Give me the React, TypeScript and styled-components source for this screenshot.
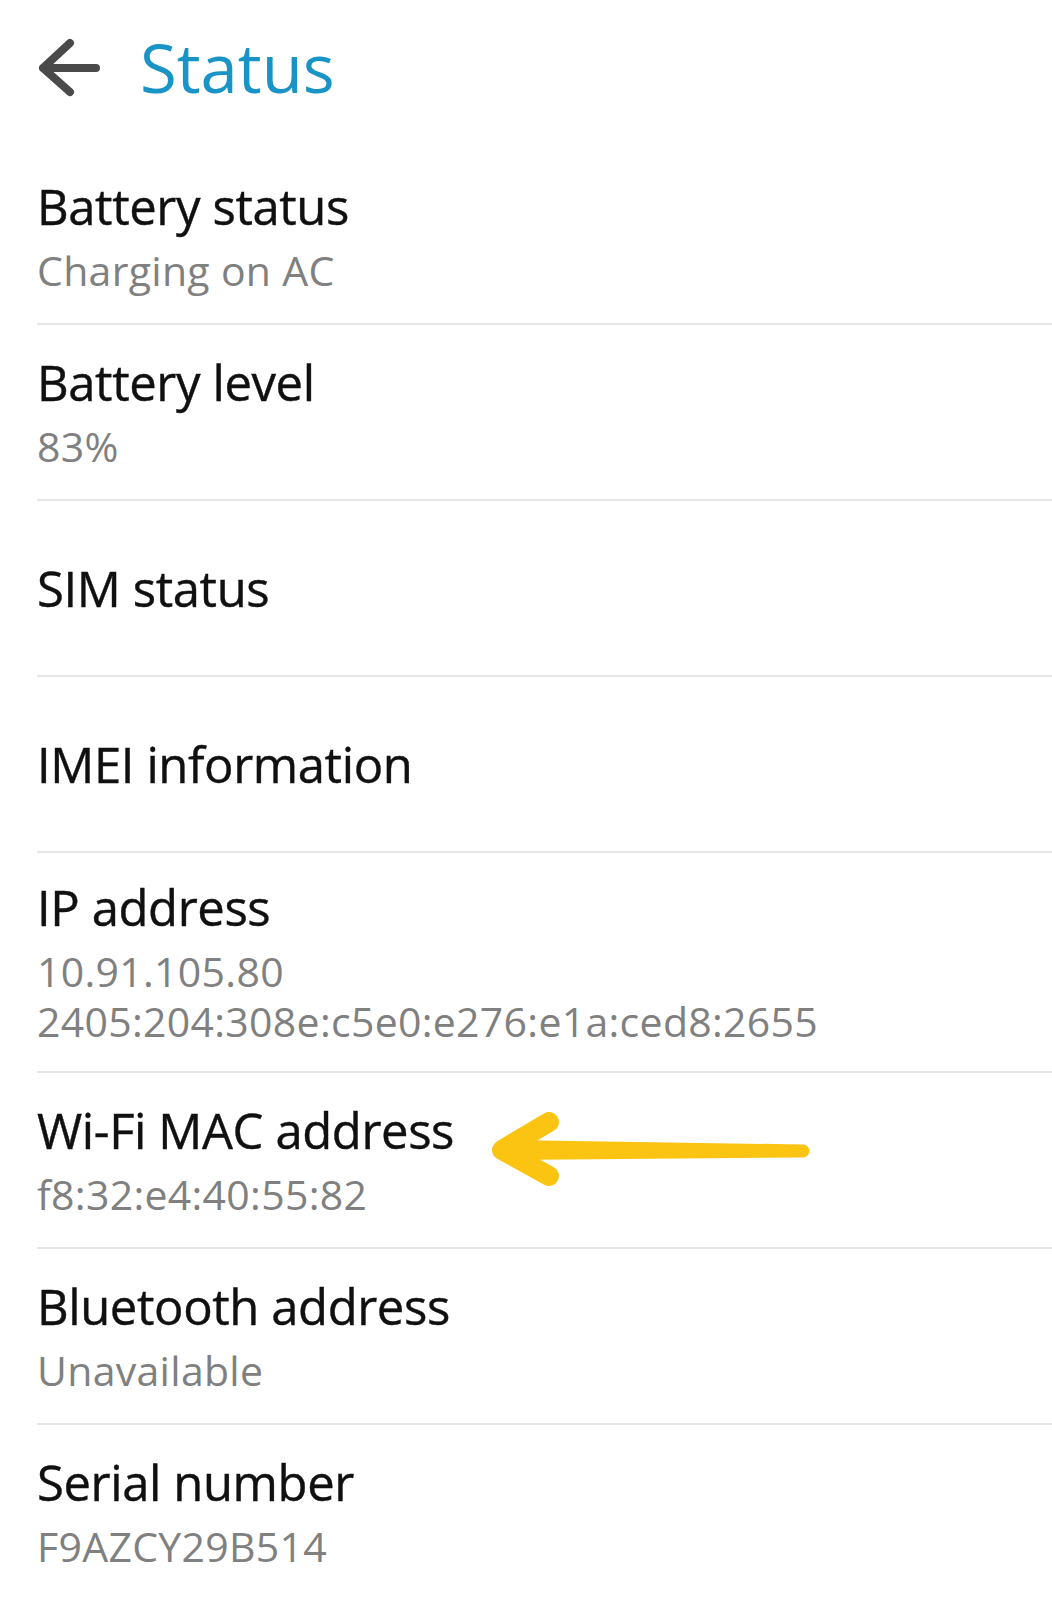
import React from 'react';
import styled, { createGlobalStyle } from 'styled-components';

const GlobalStyle = createGlobalStyle`
  html, body {
    margin: 0;
    padding: 0;
    background: #ffffff;
  }
  body {
    font-family: "Open Sans", "Noto Sans", sans-serif;
  }
`

const Screen = styled.div`
  width: 1052px;
  min-height: 1600px;
  background: #ffffff;
  overflow: hidden;
`

const Header = styled.header`
  display: flex;
  align-items: center;
  height: 135px;
  padding-left: 36px;
  margin-bottom: 14px;
`

const BackButton = styled.button`
  display: flex;
  align-items: center;
  padding: 0;
  border: none;
  background: none;
  cursor: pointer;
`

const Title = styled.h1`
  margin: 0 0 0 40px;
  font-size: 67px;
  line-height: 1;
  font-weight: 400;
  color: #1a94c6;
`

const List = styled.ul`
  list-style: none;
  margin: 0 0 0 37px;
  padding: 0;
`

const Row = styled.li`
  position: relative;
  box-sizing: border-box;
  display: flex;
  flex-direction: column;
  justify-content: center;
  min-height: 176px;
  padding: 25px 0;
  border-bottom: 2px solid #e6e6e6;

  &:last-child {
    border-bottom-color: transparent;
  }
`

const RowTitle = styled.div`
  font-size: 49px;
  line-height: 58px;
  letter-spacing: -0.4px;
  color: #101010;
  -webkit-text-stroke: 0.4px #101010;
`

const RowValues = styled.div`
  margin-top: 10px;
`

const RowValue = styled.div`
  font-size: 41px;
  line-height: 50px;
  letter-spacing: 0.3px;
  color: #808080;
`

const Pointer = styled.svg`
  position: absolute;
  left: 450px;
  top: 34px;
`

const BackArrow = () => (
  <svg width="64" height="60" viewBox="0 0 64 60">
    <path
      d="M34 5 L7 30 L34 54 M7 30 L60 30"
      fill="none"
      stroke="#4a4a4a"
      strokeWidth="8"
      strokeLinecap="round"
      strokeLinejoin="round"
    />
  </svg>
)

const YellowArrow = () => (
  <Pointer width="340" height="90" viewBox="0 0 340 90">
    <path d="M22 33 L316 37.5 A6.5 6.5 0 0 1 316 50.5 L22 53 Z" fill="#fbc412" />
    <polyline
      points="62,15 15,43 62,69"
      fill="none"
      stroke="#fbc412"
      strokeWidth="20"
      strokeLinecap="round"
      strokeLinejoin="round"
    />
  </Pointer>
)

const items: { title: string; values: string[]; marked?: boolean }[] = [
  { title: 'Battery status', values: ['Charging on AC'] },
  { title: 'Battery level', values: ['83%'] },
  { title: 'SIM status', values: [] },
  { title: 'IMEI information', values: [] },
  { title: 'IP address', values: ['10.91.105.80', '2405:204:308e:c5e0:e276:e1a:ced8:2655'] },
  { title: 'Wi-Fi MAC address', values: ['f8:32:e4:40:55:82'], marked: true },
  { title: 'Bluetooth address', values: ['Unavailable'] },
  { title: 'Serial number', values: ['F9AZCY29B514'] },
]

export default function App() {
  return (
    <Screen>
      <GlobalStyle />
      <Header>
        <BackButton aria-label="Back">
          <BackArrow />
        </BackButton>
        <Title>Status</Title>
      </Header>
      <List>
        {items.map((item) => (
          <Row key={item.title}>
            <RowTitle>{item.title}</RowTitle>
            {item.values.length > 0 && (
              <RowValues>
                {item.values.map((v) => (
                  <RowValue key={v}>{v}</RowValue>
                ))}
              </RowValues>
            )}
            {item.marked && <YellowArrow />}
          </Row>
        ))}
      </List>
    </Screen>
  )
}
